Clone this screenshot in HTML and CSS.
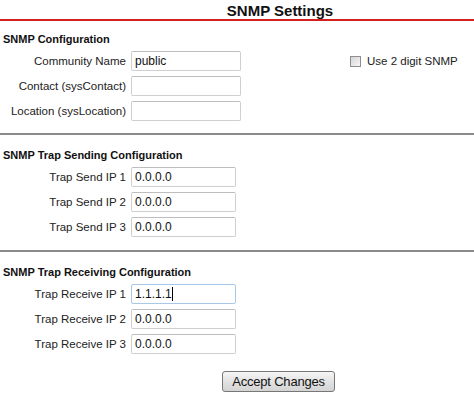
FILE: index.html
```html
<!DOCTYPE html>
<html>
<head>
<meta charset="utf-8">
<title>SNMP Settings</title>
<link rel="stylesheet" href="styles.css">
</head>
<body>
<h1 class="title">SNMP Settings</h1>

<section class="group">
  <h2 class="group-title">SNMP Configuration</h2>
  <div class="rows rows-wide">
    <label class="lbl" for="community">Community Name</label>
    <input class="field" id="community" type="text" value="public">
    <label class="option"><input class="check" type="checkbox"> Use 2 digit SNMP</label>
    <label class="lbl" for="contact">Contact (sysContact)</label>
    <input class="field" id="contact" type="text" value="">
    <span></span>
    <label class="lbl" for="location">Location (sysLocation)</label>
    <input class="field" id="location" type="text" value="">
    <span></span>
  </div>
</section>

<section class="group">
  <h2 class="group-title">SNMP Trap Sending Configuration</h2>
  <div class="rows">
    <label class="lbl" for="s1">Trap Send IP 1</label>
    <input class="field" id="s1" type="text" value="0.0.0.0">
    <label class="lbl" for="s2">Trap Send IP 2</label>
    <input class="field" id="s2" type="text" value="0.0.0.0">
    <label class="lbl" for="s3">Trap Send IP 3</label>
    <input class="field" id="s3" type="text" value="0.0.0.0">
  </div>
</section>

<section class="group group-last">
  <h2 class="group-title">SNMP Trap Receiving Configuration</h2>
  <div class="rows">
    <label class="lbl" for="r1">Trap Receive IP 1</label>
    <span class="caret-wrap"><input class="field field-focus" id="r1" type="text" value="1.1.1.1"></span>
    <label class="lbl" for="r2">Trap Receive IP 2</label>
    <input class="field" id="r2" type="text" value="0.0.0.0">
    <label class="lbl" for="r3">Trap Receive IP 3</label>
    <input class="field" id="r3" type="text" value="0.0.0.0">
  </div>
  <div class="actions">
    <button class="btn" type="button">Accept Changes</button>
  </div>
</section>
</body>
</html>
```

FILE: styles.css
```css
html, body {
  margin: 0;
  padding: 0;
  background: #ffffff;
}

body {
  font-family: "Liberation Sans", Arial, sans-serif;
  color: #222222;
  width: 474px;
}

.title {
  margin: 0;
  height: 19px;
  line-height: 21px;
  font-size: 15px;
  font-weight: bold;
  color: #111111;
  text-align: center;
  padding-left: 86px;
  border-bottom: 2px solid #d42020;
}

.group {
  padding: 11px 3px 12px 3px;
  border-bottom: 2px solid #8a8a8a;
}

.group + .group {
  padding-top: 13px;
  padding-bottom: 13px;
}

.group-last {
  border-bottom: none;
}

.group-title {
  margin: 0 0 5px 0;
  height: 14px;
  line-height: 14px;
  font-size: 11px;
  font-weight: bold;
  color: #111111;
}

.rows {
  display: grid;
  grid-template-columns: 123px 105px;
  grid-auto-rows: 20px;
  column-gap: 5px;
  row-gap: 5px;
  align-items: center;
}

.rows-wide {
  grid-template-columns: 123px 110px auto;
}

.lbl {
  text-align: right;
  font-size: 11.5px;
  white-space: nowrap;
  color: #222222;
}

.field {
  box-sizing: border-box;
  width: 100%;
  height: 20px;
  margin: 0;
  padding: 0 3px;
  border: 1px solid #cfcfcf;
  border-top-color: #bdbdbd;
  border-radius: 2px;
  background: #ffffff;
  font-family: "Liberation Sans", Arial, sans-serif;
  font-size: 12px;
  color: #111111;
  outline: none;
}

.field-focus {
  border-color: #a9c8e8;
}

.caret-wrap {
  position: relative;
  display: block;
  height: 20px;
}

.caret-wrap::after {
  content: "";
  position: absolute;
  left: 41px;
  top: 3px;
  width: 1px;
  height: 14px;
  background: #000000;
}

.option {
  display: flex;
  align-items: center;
  gap: 6px;
  margin-left: 104px;
  font-size: 11.5px;
  white-space: nowrap;
  color: #222222;
}

.check {
  appearance: none;
  -webkit-appearance: none;
  box-sizing: border-box;
  width: 11px;
  height: 11px;
  margin: 0;
  border: 1px solid #8e8e8e;
  background: linear-gradient(135deg, #d6d6d6, #f6f6f6);
}

.actions {
  padding: 17px 0 0 219px;
}

.btn {
  box-sizing: border-box;
  width: 113px;
  height: 21px;
  margin: 0;
  padding: 0;
  border: 1px solid #777777;
  border-radius: 3px;
  background: linear-gradient(#f6f6f6, #e2e2e2 50%, #d4d4d4);
  font-family: "Liberation Sans", Arial, sans-serif;
  font-size: 13px;
  color: #111111;
  letter-spacing: -0.2px;
}
```
